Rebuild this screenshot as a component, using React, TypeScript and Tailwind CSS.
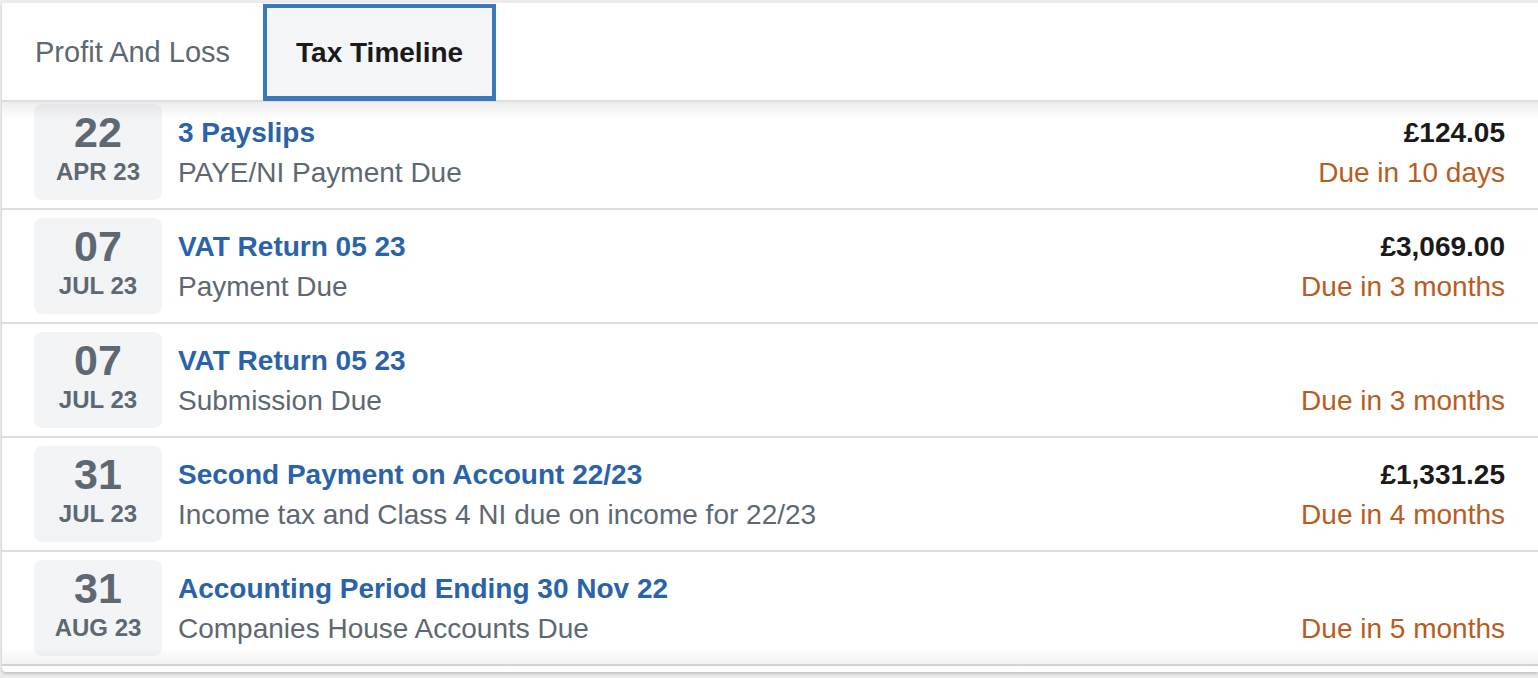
import React from "react";

type Item = {
  day: string;
  month: string;
  title: string;
  subtitle: string;
  amount?: string;
  due: string;
};

const items: Item[] = [
  { day: "22", month: "APR 23", title: "3 Payslips", subtitle: "PAYE/NI Payment Due", amount: "£124.05", due: "Due in 10 days" },
  { day: "07", month: "JUL 23", title: "VAT Return 05 23", subtitle: "Payment Due", amount: "£3,069.00", due: "Due in 3 months" },
  { day: "07", month: "JUL 23", title: "VAT Return 05 23", subtitle: "Submission Due", due: "Due in 3 months" },
  { day: "31", month: "JUL 23", title: "Second Payment on Account 22/23", subtitle: "Income tax and Class 4 NI due on income for 22/23", amount: "£1,331.25", due: "Due in 4 months" },
  { day: "31", month: "AUG 23", title: "Accounting Period Ending 30 Nov 22", subtitle: "Companies House Accounts Due", due: "Due in 5 months" },
];

function Row({ item }: { item: Item }) {
  return (
    <div className="flex items-center border-b-2 border-[#dcdee2] pl-[32px] pr-[33px] py-[8px]">
      <div className="flex h-[96px] w-[128px] shrink-0 flex-col items-center justify-center rounded-[8px] bg-[#f3f4f6] text-[#5d6873] font-bold">
        <div className="text-[43px] leading-[40px]">{item.day}</div>
        <div className="text-[24px] leading-[40px]">{item.month}</div>
      </div>
      <div className="ml-[16px] flex min-w-0 flex-1 flex-col pt-[2px] text-[28px] leading-[40px]">
        <div className="font-bold text-[#2a63a9]">{item.title}</div>
        <div className="text-[#5d6873]">{item.subtitle}</div>
      </div>
      <div className="flex flex-col items-end pt-[2px] text-[28px] leading-[40px]">
        <div className="h-[40px] font-bold text-[#1a1a1a]">{item.amount ?? ""}</div>
        <div className="text-[#b85c22]">{item.due}</div>
      </div>
    </div>
  );
}

export default function App() {
  return (
    <div
      className="h-[678px] w-[1538px] overflow-hidden bg-[#ececec] pl-[2px] pt-[3px]"
      style={{ fontFamily: '"Liberation Sans", Arial, Helvetica, sans-serif' }}
    >
      <div className="h-[669px] rounded-bl-[4px] bg-white shadow-[0_2px_3px_rgba(0,0,0,0.18)] pb-[6px] flex flex-col">
        <div className="flex h-[99px] shrink-0 items-stretch border-b-2 border-[#dcdee2] pt-[2px]">
          <div className="flex items-center px-[33px] text-[29px] text-[#5d6873]">Profit And Loss</div>
          <div className="-mt-[1px] mb-[-1px] flex items-center border-[4px] border-b-[5px] border-[#3a78bd] bg-[#f4f5f7] px-[29px] pt-[2px] text-[28px] font-bold text-[#1a1a1a]">
            Tax Timeline
          </div>
        </div>
        <div className="relative flex-1 overflow-hidden">
          <div className="-mt-[6px]">
            {items.map((item, i) => (
              <Row key={i} item={item} />
            ))}
          </div>
          <div className="pointer-events-none absolute inset-x-0 top-0 h-[18px] bg-gradient-to-b from-[rgba(0,0,0,0.07)] to-transparent" />
          <div className="pointer-events-none absolute inset-x-0 bottom-0 h-[18px] bg-gradient-to-t from-[rgba(0,0,0,0.06)] to-transparent" />
        </div>
      </div>
    </div>
  );
}
